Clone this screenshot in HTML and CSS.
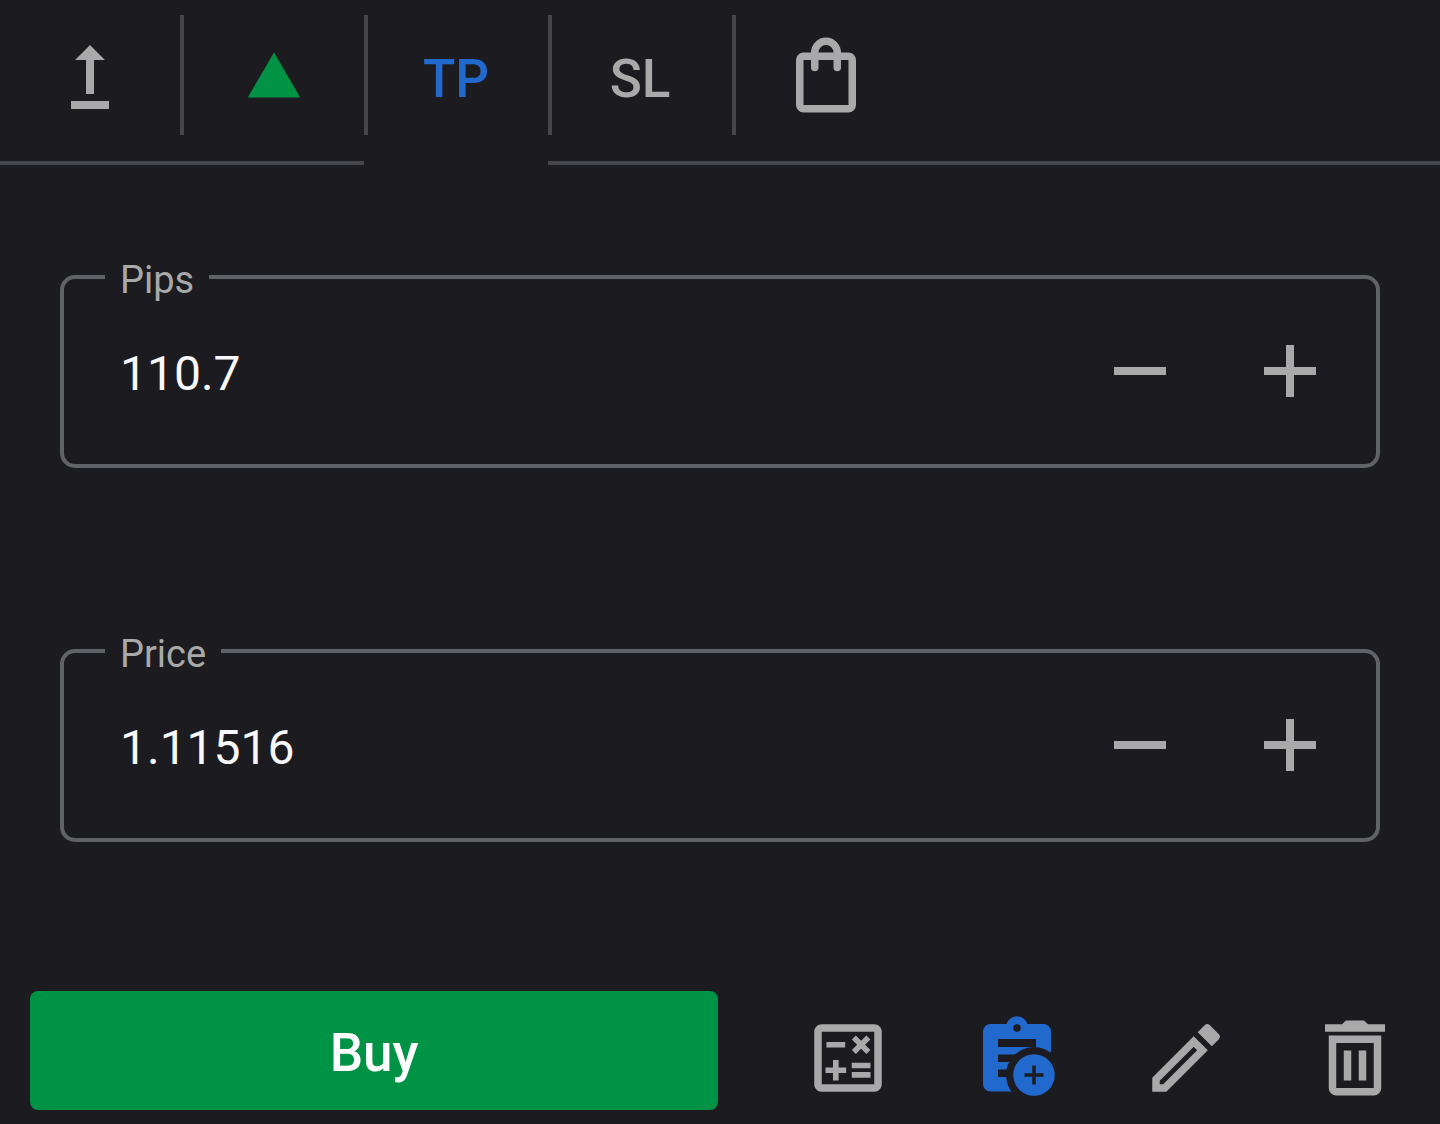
FILE: index.html
```html
<!DOCTYPE html>
<html lang="en">
<head>
<meta charset="utf-8">
<meta name="viewport" content="width=device-width, initial-scale=1">
<title>Take profit</title>
<link rel="stylesheet" href="styles.css">
</head>
<body>
<div class="ticket">
  <nav class="tabs" role="tablist">
    <button class="tab" type="button" role="tab" aria-label="Order type">
      <span class="tab-inner"><svg class="icon" viewBox="0 0 90 90"><path d="M45 15 60 30H49V64H41V30H30ZM26 71H64V79H26Z"/></svg></span>
    </button>
    <button class="tab" type="button" role="tab" aria-label="Direction">
      <span class="tab-inner"><svg class="icon icon-up" viewBox="0 0 90 90"><path d="M45 22.500 71.250 67.500H18.750Z"/></svg></span>
    </button>
    <button class="tab tab-active" type="button" role="tab" aria-selected="true"><span class="tab-inner tab-text">TP</span></button>
    <button class="tab" type="button" role="tab"><span class="tab-inner tab-text">SL</span></button>
    <button class="tab" type="button" role="tab" aria-label="Size">
      <span class="tab-inner"><svg class="icon" viewBox="0 0 90 90"><path fill-rule="evenodd" d="M30 22.500A15 15 0 0 1 60 22.500H67.500A7.500 7.500 0 0 1 75 30V75A7.500 7.500 0 0 1 67.500 82.500H22.500A7.500 7.500 0 0 1 15 75V30A7.500 7.500 0 0 1 22.500 22.500ZM37.500 22.500H52.500A7.500 7.500 0 0 0 37.500 22.500ZM22.500 30V75H67.500V30H60V37.500A3.750 3.750 0 0 1 52.500 37.500V30H37.500V37.500A3.750 3.750 0 0 1 30 37.500V30Z"/></svg></span>
    </button>
    <span class="tabs-rest"></span>
  </nav>

  <main class="panel">
    <fieldset class="field">
      <legend class="field-legend"><label for="pips">Pips</label></legend>
      <div class="field-row">
        <input class="field-input" id="pips" type="text" inputmode="decimal" value="110.7">
        <button class="step" type="button" aria-label="Decrease pips"><svg class="icon" viewBox="0 0 90 90"><path d="M19 41H71V49H19Z"/></svg></button>
        <button class="step" type="button" aria-label="Increase pips"><svg class="icon" viewBox="0 0 90 90"><path d="M41 19H49V41H71V49H49V71H41V49H19V41H41Z"/></svg></button>
      </div>
    </fieldset>
    <fieldset class="field">
      <legend class="field-legend"><label for="price">Price</label></legend>
      <div class="field-row">
        <input class="field-input" id="price" type="text" inputmode="decimal" value="1.11516">
        <button class="step" type="button" aria-label="Decrease price"><svg class="icon" viewBox="0 0 90 90"><path d="M19 41H71V49H19Z"/></svg></button>
        <button class="step" type="button" aria-label="Increase price"><svg class="icon" viewBox="0 0 90 90"><path d="M41 19H49V41H71V49H49V71H41V49H19V41H41Z"/></svg></button>
      </div>
    </fieldset>
  </main>

  <footer class="footer">
    <button class="buy" type="button">Buy</button>
    <div class="actions">
      <button class="action" type="button" aria-label="Calculator">
        <svg class="icon" viewBox="0 0 24 24"><path fill-rule="evenodd" d="M19 3H5c-1.100 0-2 .9-2 2v14c0 1.100.9 2 2 2h14c1.100 0 2-.9 2-2V5c0-1.100-.9-2-2-2zm0 16H5V5h14v14z"/><path d="M6.250 7.720h5v1.500h-5zM13 15.750h5v1.500h-5zM13 13.250h5v1.500h-5zM8 18h1.500v-2h2v-1.500h-2v-2H8v2H6V16h2zM14.090 10.950l1.410-1.410 1.410 1.410 1.060-1.060-1.410-1.420 1.410-1.410L16.910 6 15.500 7.410 14.090 6l-1.060 1.060 1.410 1.410-1.410 1.420z"/></svg>
      </button>
      <button class="action action-on" type="button" aria-label="Add order">
        <svg class="icon" viewBox="0 0 90 90"><path fill-rule="evenodd" d="M18.500 11H34.500A11 11 0 0 1 55.500 11H71.500A7.500 7.500 0 0 1 79 18.500V60H60V78.500H18.500A7.500 7.500 0 0 1 11 71V18.500A7.500 7.500 0 0 1 18.500 11ZM45 11.250A3.750 3.750 0 1 0 45 18.750 3.750 3.750 0 1 0 45 11.250ZM26 26V34H64V26ZM26 41.500V49H50V41.500ZM26 56.500V64H50V56.500Z"/><circle class="icon-gap" cx="62" cy="62" r="28"/><path fill-rule="evenodd" d="M62 41.250A20.750 20.750 0 1 0 62 82.750 20.750 20.750 0 1 0 62 41.250ZM60.250 52.500H63.750V60.250H71.500V63.750H63.750V71.500H60.250V63.750H52.500V60.250H60.250Z"/></svg>
      </button>
      <button class="action" type="button" aria-label="Edit">
        <svg class="icon" viewBox="0 0 24 24"><path fill-rule="evenodd" d="M3 17.250V21h3.750L17.810 9.940l-3.750-3.750L3 17.250zM5.920 19H5v-.92l9.060-9.060.92.920L5.920 19zM20.710 5.630l-2.340-2.340a1 1 0 0 0-1.410 0l-1.830 1.830 3.750 3.750 1.830-1.830a1 1 0 0 0 0-1.410z"/></svg>
      </button>
      <button class="action" type="button" aria-label="Delete">
        <svg class="icon" viewBox="0 0 90 90"><path fill-rule="evenodd" d="M15 11.250H32L36 7.500H54L58 11.250H75V18.750H15ZM18.750 22.500H71.250V75A7.500 7.500 0 0 1 63.750 82.500H26.250A7.500 7.500 0 0 1 18.750 75ZM26.250 30V75H63.750V30ZM33.750 37.500H41.250V67.500H33.750ZM48.750 37.500H56.250V67.500H48.750Z"/></svg>
      </button>
    </div>
  </footer>
</div>
</body>
</html>
```
FILE: styles.css
```css
:root {
  --bg: #1c1b1f;
  --line: #46474c;
  --outline: #5f6368;
  --muted: #a9a9a9;
  --text: #f8f8fa;
  --green: #009345;
  --blue: #2269ce;
}

* { box-sizing: border-box; }

body {
  margin: 0;
  background: var(--bg);
  color: var(--text);
  font-family: Roboto, "Liberation Sans", sans-serif;
}

button {
  margin: 0;
  padding: 0;
  border: 0;
  background: none;
  color: var(--muted);
  font: inherit;
  cursor: pointer;
}

.ticket {
  display: flex;
  flex-direction: column;
  min-height: 100vh;
}

.icon {
  display: block;
  width: 90px;
  height: 90px;
  fill: currentColor;
}

.icon-up { color: var(--green); }

.icon-gap { fill: var(--bg); }

/* Tabs */
.tabs { display: flex; }

.tab {
  flex: 0 0 184px;
  padding: 15px 0 26px;
  border-bottom: 4px solid var(--line);
  font-size: 53px;
  font-weight: 500;
}

.tab:first-child { flex-basis: 180px; }

.tab-inner {
  display: flex;
  align-items: center;
  justify-content: center;
  height: 120px;
  border-left: 4px solid var(--line);
}

.tab:first-child .tab-inner { border-left: 0; }

.tab-text { padding: 8px 4px 0 0; }

.tab-active {
  border-bottom-color: transparent;
  color: var(--blue);
}

.tabs-rest {
  flex: 1;
  border-bottom: 4px solid var(--line);
}

/* Fields */
.panel {
  display: flex;
  flex: 1;
  flex-direction: column;
  gap: 161px;
  padding: 90px 60px 149px;
}

.field {
  min-width: 0;
  margin: 0;
  padding: 0 11px 21px 41px;
  border: 4px solid var(--outline);
  border-radius: 15px;
}

.field-legend {
  padding: 6px 15px 0;
  color: var(--muted);
  font-size: 38px;
  line-height: 38px;
}

.field-row { display: flex; }

.field-input {
  flex: 1;
  min-width: 0;
  height: 144px;
  padding: 4px 15px 0;
  border: 0;
  outline: 0;
  background: none;
  color: var(--text);
  font: inherit;
  font-size: 48px;
}

.step {
  display: flex;
  flex: 0 0 150px;
  align-items: center;
  justify-content: center;
}

/* Footer */
.footer {
  display: flex;
  gap: 45px;
  padding-left: 30px;
}

.buy {
  flex: 1;
  height: 119px;
  margin-bottom: 14px;
  padding-top: 4px;
  border-radius: 8px;
  background: var(--green);
  color: #fff;
  font-size: 53px;
  font-weight: 500;
}

.actions {
  display: flex;
  width: 48%;
}

.action {
  display: flex;
  flex: 1;
  align-items: center;
  justify-content: center;
}

.action-on { color: var(--blue); }
```
